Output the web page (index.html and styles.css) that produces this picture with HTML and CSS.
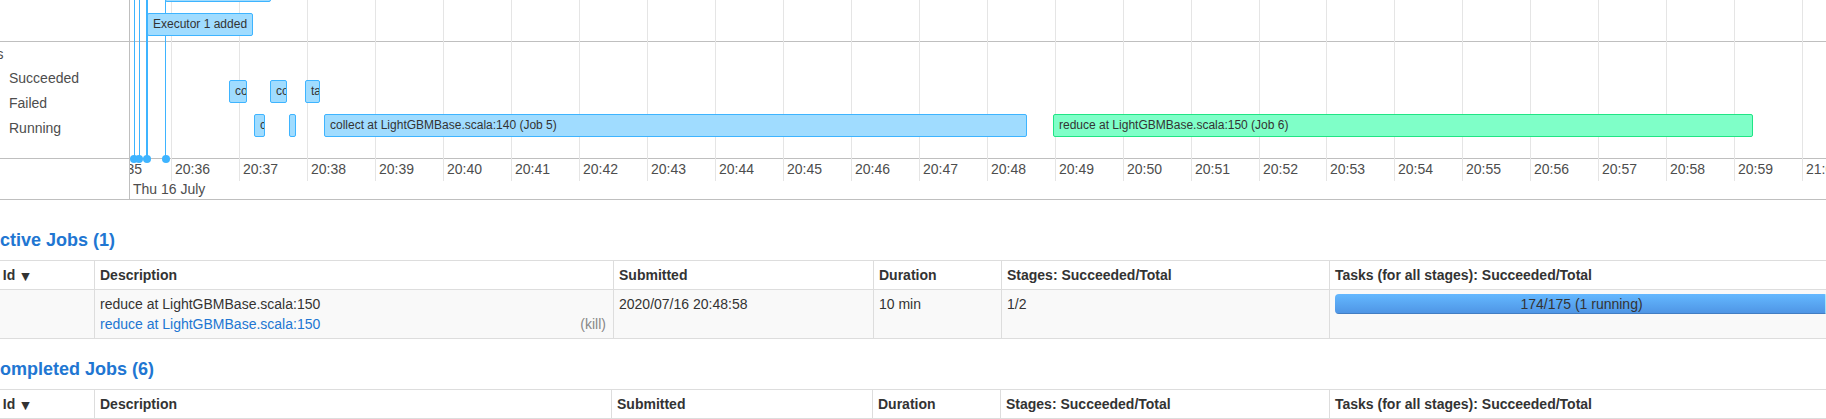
FILE: index.html
```html
<!DOCTYPE html>
<html lang="en">
<head>
<meta charset="utf-8">
<title>Spark Jobs</title>
<link rel="stylesheet" href="styles.css">
</head>
<body>
<div class="page">
  <div class="timeline">
    <div class="tl-labels">
      <div class="g-exec"></div>
      <div class="g-jobs lbl-jobs">
        <div class="lbl-title">Jobs</div>
        <svg class="legend" width="150" height="85" viewBox="0 0 150 85">
          <rect class="lg-succeeded" x="5" y="5" width="20" height="15" rx="2" ry="2"></rect>
          <text x="35" y="17">Succeeded</text>
          <rect class="lg-failed" x="5" y="30" width="20" height="15" rx="2" ry="2"></rect>
          <text x="35" y="42">Failed</text>
          <rect class="lg-running" x="5" y="55" width="20" height="15" rx="2" ry="2"></rect>
          <text x="35" y="67">Running</text>
        </svg>
      </div>
      <div class="g-axis"></div>
    </div>
    <div class="tl-center">
      <div class="g-exec"></div>
      <div class="g-jobs"></div>
      <div class="g-axis"></div>

      <div class="tick" style="left:-27px"><span class="tick-label">20:35</span></div>
      <div class="tick" style="left:41px"><span class="tick-label">20:36</span></div>
      <div class="tick" style="left:109px"><span class="tick-label">20:37</span></div>
      <div class="tick" style="left:177px"><span class="tick-label">20:38</span></div>
      <div class="tick" style="left:245px"><span class="tick-label">20:39</span></div>
      <div class="tick" style="left:313px"><span class="tick-label">20:40</span></div>
      <div class="tick" style="left:381px"><span class="tick-label">20:41</span></div>
      <div class="tick" style="left:449px"><span class="tick-label">20:42</span></div>
      <div class="tick" style="left:517px"><span class="tick-label">20:43</span></div>
      <div class="tick" style="left:585px"><span class="tick-label">20:44</span></div>
      <div class="tick" style="left:653px"><span class="tick-label">20:45</span></div>
      <div class="tick" style="left:721px"><span class="tick-label">20:46</span></div>
      <div class="tick" style="left:789px"><span class="tick-label">20:47</span></div>
      <div class="tick" style="left:857px"><span class="tick-label">20:48</span></div>
      <div class="tick" style="left:925px"><span class="tick-label">20:49</span></div>
      <div class="tick" style="left:993px"><span class="tick-label">20:50</span></div>
      <div class="tick" style="left:1061px"><span class="tick-label">20:51</span></div>
      <div class="tick" style="left:1129px"><span class="tick-label">20:52</span></div>
      <div class="tick" style="left:1196px"><span class="tick-label">20:53</span></div>
      <div class="tick" style="left:1264px"><span class="tick-label">20:54</span></div>
      <div class="tick" style="left:1332px"><span class="tick-label">20:55</span></div>
      <div class="tick" style="left:1400px"><span class="tick-label">20:56</span></div>
      <div class="tick" style="left:1468px"><span class="tick-label">20:57</span></div>
      <div class="tick" style="left:1536px"><span class="tick-label">20:58</span></div>
      <div class="tick" style="left:1604px"><span class="tick-label">20:59</span></div>
      <div class="tick" style="left:1672px"><span class="tick-label">21:00</span></div>
      <div class="major-label">Thu 16 July</div>

      <div class="evline" style="left:4px"></div>
      <div class="evline" style="left:9px"></div>
      <div class="evline" style="left:16px"></div>
      <div class="evline" style="left:17px"></div>
      <div class="evline" style="left:35px"></div>
      <div class="dot" style="left:0px"></div>
      <div class="dot" style="left:5px"></div>
      <div class="dot" style="left:13px"></div>
      <div class="dot" style="left:32px"></div>

      <div class="item" style="left:35px;top:-21px;width:106px">Executor 2 added</div>
      <div class="item" style="left:17px;top:13px;width:106px">Executor 1 added</div>

      <div class="item" style="left:99px;top:80px;width:18px">count at LightGBMBase.scala:120 (Job 0)</div>
      <div class="item" style="left:140px;top:80px;width:17px">collect at LightGBMBase.scala:125 (Job 2)</div>
      <div class="item" style="left:175px;top:80px;width:15px">take at LightGBMBase.scala:130 (Job 4)</div>
      <div class="item" style="left:124px;top:114px;width:11px">count at LightGBMBase.scala:122 (Job 1)</div>
      <div class="item" style="left:159px;top:114px;width:7px">take at LightGBMBase.scala:128 (Job 3)</div>
      <div class="item" style="left:194px;top:114px;width:703px">collect at LightGBMBase.scala:140 (Job 5)</div>
      <div class="item running" style="left:923px;top:114px;width:700px">reduce at LightGBMBase.scala:150 (Job 6)</div>
    </div>
  </div>

  <h4 class="section-title"><span class="arrow-open"></span><a href="#active">Active Jobs (1)</a></h4>
  <table class="jobs-table active-table">
    <colgroup>
      <col class="c-id"><col class="c-desc"><col class="c-sub"><col class="c-dur"><col class="c-stages"><col class="c-tasks">
    </colgroup>
    <thead>
      <tr><th>Job Id&nbsp;<span class="sort">▼</span></th><th>Description</th><th>Submitted</th><th>Duration</th><th>Stages: Succeeded/Total</th><th>Tasks (for all stages): Succeeded/Total</th></tr>
    </thead>
    <tbody>
      <tr>
        <td>6</td>
        <td><div class="desc-input">reduce at LightGBMBase.scala:150</div><a class="kill-link" href="#kill">(kill)</a><a class="name-link" href="#job6">reduce at LightGBMBase.scala:150</a></td>
        <td>2020/07/16 20:48:58</td>
        <td>10 min</td>
        <td>1/2</td>
        <td>
          <div class="progress">
            <span class="progress-text">174/175 (1 running)</span>
            <div class="bar bar-completed" style="width:99.43%"></div>
            <div class="bar bar-started" style="width:0.57%"></div>
          </div>
        </td>
      </tr>
    </tbody>
  </table>

  <h4 class="section-title"><span class="arrow-open"></span><a href="#completed">Completed Jobs (6)</a></h4>
  <table class="jobs-table completed-table">
    <colgroup>
      <col class="c-id"><col class="c-desc"><col class="c-sub"><col class="c-dur"><col class="c-stages"><col class="c-tasks">
    </colgroup>
    <thead>
      <tr><th>Job Id&nbsp;<span class="sort">▼</span></th><th>Description</th><th>Submitted</th><th>Duration</th><th>Stages: Succeeded/Total</th><th>Tasks (for all stages): Succeeded/Total</th></tr>
    </thead>
    <tbody>
      <tr><td>5</td><td>collect at LightGBMBase.scala:140</td><td>2020/07/16 20:38:12</td><td>10 min</td><td>2/2</td><td>175/175</td></tr>
    </tbody>
  </table>
</div>
</body>
</html>
```

FILE: styles.css
```css
html, body {
  margin: 0;
  padding: 0;
  overflow: hidden;
  background: #fff;
}

body {
  font-family: "Liberation Sans", Arial, Helvetica, sans-serif;
  font-size: 14px;
  line-height: 20px;
  color: #333;
}

.page {
  width: 1865px;
  margin-left: -32px;
}

/* ---------- timeline ---------- */
.timeline {
  display: flex;
  border-bottom: 1px solid #bfbfbf;
  margin-bottom: 30px;
}

.tl-labels {
  flex: none;
  width: 161px;
  border-right: 1px solid #bfbfbf;
  color: #4d4d4d;
}

.tl-center {
  flex: 1;
  position: relative;
  overflow: hidden;
}

.g-exec {
  height: 41px;
  border-bottom: 1px solid #bfbfbf;
}

.g-jobs {
  height: 116px;
  border-bottom: 1px solid #bfbfbf;
}

.g-axis {
  height: 40px;
}

.lbl-jobs {
  box-sizing: content-box;
  padding-left: 6px;
  height: 116px;
}

.lbl-title {
  padding-top: 2px;
  line-height: 20px;
}

.legend {
  display: block;
  margin-top: 2px;
}

.legend text {
  font-family: "Liberation Sans", Arial, sans-serif;
  font-size: 14px;
  fill: #4d4d4d;
}

.lg-succeeded { fill: #a0dcff; stroke: #3eb4ff; }
.lg-failed { fill: #ff5475; stroke: #ff0000; }
.lg-running { fill: #7fffc8; stroke: #20e585; }

.tick {
  position: absolute;
  top: 0;
  width: 1px;
  height: 181px;
  background: #e5e5e5;
  z-index: 0;
}

.tick-label {
  position: absolute;
  left: 4px;
  top: 159px;
  line-height: 20px;
  color: #4d4d4d;
  white-space: nowrap;
}

.major-label {
  position: absolute;
  left: 3px;
  top: 179px;
  line-height: 20px;
  color: #4d4d4d;
  white-space: nowrap;
}

.evline {
  position: absolute;
  top: 0;
  width: 1px;
  height: 158px;
  background: #3eb4ff;
  z-index: 1;
}

.dot {
  position: absolute;
  top: 155px;
  width: 8px;
  height: 8px;
  border-radius: 50%;
  background: #3eb4ff;
  z-index: 1;
}

.item {
  position: absolute;
  z-index: 2;
  box-sizing: border-box;
  height: 23px;
  padding-left: 5px;
  border: 1px solid #3eb4ff;
  border-radius: 2px;
  background: #a0dcff;
  font-size: 12px;
  line-height: 21px;
  color: #333;
  white-space: nowrap;
  overflow: hidden;
}

.item.running {
  background: #7fffc8;
  border-color: #20e585;
}

/* ---------- sections ---------- */
.section-title {
  margin: 10px 0 10px;
  font-size: 18px;
  line-height: 20px;
  font-weight: bold;
  white-space: nowrap;
}

.section-title a {
  color: #2176d2;
  text-decoration: none;
}

.arrow-open {
  display: inline-block;
  width: 0;
  height: 0;
  margin-right: 9px;
  border-left: 5px solid transparent;
  border-right: 5px solid transparent;
  border-top: 5px solid #2176d2;
  vertical-align: middle;
}

/* ---------- tables ---------- */
.jobs-table {
  width: 1865px;
  table-layout: fixed;
  border-collapse: collapse;
  margin-bottom: 20px;
}

.jobs-table th,
.jobs-table td {
  border: 1px solid #ddd;
  padding: 4px 5px;
  text-align: left;
  vertical-align: top;
  white-space: nowrap;
}

.jobs-table th {
  font-weight: bold;
  vertical-align: bottom;
  background: #fff;
}

.jobs-table tbody tr:nth-child(odd) td {
  background: #f9f9f9;
}

.active-table .c-id { width: 126px; }
.active-table .c-desc { width: 519px; }
.active-table .c-sub { width: 260px; }
.active-table .c-dur { width: 128px; }
.active-table .c-stages { width: 328px; }
.active-table .c-tasks { width: 504px; }

.completed-table .c-id { width: 126px; }
.completed-table .c-desc { width: 517px; }
.completed-table .c-sub { width: 261px; }
.completed-table .c-dur { width: 128px; }
.completed-table .c-stages { width: 329px; }
.completed-table .c-tasks { width: 504px; }

.sort {
  font-family: "DejaVu Sans", sans-serif;
  font-size: 11px;
  line-height: 11px;
  font-weight: normal;
  margin-left: 2px;
}

.name-link {
  color: #2176d2;
  text-decoration: none;
}

.kill-link {
  float: right;
  margin-left: 20px;
  margin-right: 2px;
  color: #888;
  text-decoration: none;
}

.progress {
  position: relative;
  display: flex;
  height: 20px;
  border-radius: 4px;
  overflow: hidden;
  background: #f5f5f5;
}

.progress-text {
  position: absolute;
  left: 0;
  right: 0;
  top: 0;
  text-align: center;
  line-height: 20px;
  color: #333;
  z-index: 1;
}

.bar {
  height: 100%;
  box-shadow: inset 0 -1px 0 rgba(0, 0, 0, 0.15);
}

.bar-completed {
  background: linear-gradient(to bottom, #64b8ff, #4e94e4);
}

.bar-started {
  background: linear-gradient(to bottom, #a4edff, #94ddff);
}
```
